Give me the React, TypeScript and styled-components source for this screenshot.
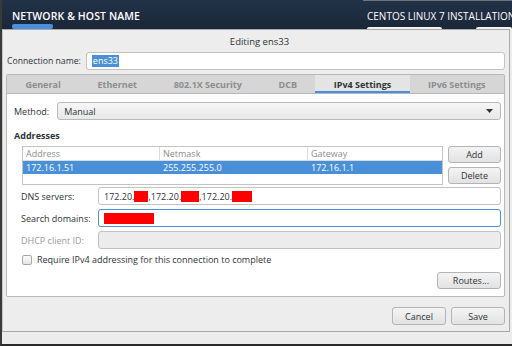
import * as React from "react"
import styled, { createGlobalStyle } from 'styled-components';

const GlobalStyle = createGlobalStyle`
  html, body {
    margin: 0;
    padding: 0;
    background: #ededed;
  }
  * {
    box-sizing: border-box;
  }
`;

const App = () => (
  <Screen>
    <GlobalStyle/>
    <TopBar>
      <SpokeSide>
        <SpokeTitle>NETWORK &amp; HOST NAME</SpokeTitle>
        <DoneButton/>
      </SpokeSide>
      <InstallSide>
        <InstallTitle>CENTOS LINUX 7 INSTALLATION</InstallTitle>
        <TopBoxes>
          <TopBox width={75}/>
          <TopBox width={36}/>
        </TopBoxes>
      </InstallSide>
    </TopBar>
    <Dialog>
      <TitleBar>Editing ens33</TitleBar>
      <NameRow>
        <NameLabel>Connection name:</NameLabel>
        <Entry>
          <Selected>ens33</Selected>
        </Entry>
      </NameRow>
      <Notebook>
        <TabBar>
          <Tab>General</Tab>
          <Tab>Ethernet</Tab>
          <Tab>802.1X Security</Tab>
          <Tab>DCB</Tab>
          <Tab active>IPv4 Settings</Tab>
          <Tab>IPv6 Settings</Tab>
        </TabBar>
        <Page>
          <MethodRow>
            <FieldLabel>Method:</FieldLabel>
            <Combo>
              <span>Manual</span>
              <svg width="7" height="4" viewBox="0 0 7 4"><path d="M0 0h7L3.5 4z" fill="#2e3436"/></svg>
            </Combo>
          </MethodRow>
          <SectionTitle>Addresses</SectionTitle>
          <AddressArea>
            <AddrTable>
              <TableHead>
                <HeadCell>Address</HeadCell>
                <HeadCell>Netmask</HeadCell>
                <HeadCell last>Gateway</HeadCell>
              </TableHead>
              <TableRow>
                <Cell>172.16.1.51</Cell>
                <Cell>255.255.255.0</Cell>
                <Cell>172.16.1.1</Cell>
              </TableRow>
            </AddrTable>
            <SideButtons>
              <Button>Add</Button>
              <Button>Delete</Button>
            </SideButtons>
          </AddressArea>
          <FormGrid>
            <FormLabel>DNS servers:</FormLabel>
            <Entry>
              172.20.<Redact width={14}/>,172.20.<Redact width={18}/>,172.20.<Redact width={20}/>
            </Entry>
            <FormLabel>Search domains:</FormLabel>
            <Entry focused>
              <Redact width={50}/>
            </Entry>
            <FormLabel disabled>DHCP client ID:</FormLabel>
            <Entry disabled/>
          </FormGrid>
          <CheckRow>
            <CheckBox/>
            <span>Require IPv4 addressing for this connection to complete</span>
          </CheckRow>
          <RoutesRow>
            <Button wide>Routes...</Button>
          </RoutesRow>
        </Page>
      </Notebook>
      <Actions>
        <Button dialog>Cancel</Button>
        <Button dialog>Save</Button>
      </Actions>
    </Dialog>
    <BottomStrip/>
  </Screen>
)

export default App

const Screen = styled.div`
  width: 512px;
  height: 346px;
  display: flex;
  flex-direction: column;
  background: #ededed;
  border-left: 2px solid #3a3a3a;
  border-bottom: 2px solid #2a2a2a;
  overflow: hidden;
  font-family: "Open Sans", "DejaVu Sans", sans-serif;
  font-size: 9px;
  color: #2e3436;
`;

const TopBar = styled.div`
  height: 29px;
  flex-shrink: 0;
  display: flex;
  justify-content: space-between;
  background: linear-gradient(180deg, #223248 0%, #1a2738 100%);
  overflow: hidden;
  margin-left: -2px;
`;

const SpokeSide = styled.div`
  display: flex;
  flex-direction: column;
  padding: 10px 0 0 12px;
`;

const SpokeTitle = styled.div`
  color: #ffffff;
  font-size: 10.5px;
  font-weight: 600;
  letter-spacing: 0.1px;
  line-height: 12px;
`;

const DoneButton = styled.div`
  margin-top: 2px;
  width: 41px;
  height: 10px;
  background: #4a8fd9;
  border-radius: 2px;
`;

const InstallSide = styled.div`
  display: flex;
  flex-direction: column;
  padding: 9px 0 0 4px;
  width: 149px;
  border-top: 1px solid #6a7482;
`;

const InstallTitle = styled.div`
  color: #ffffff;
  font-size: 10px;
  line-height: 12px;
  white-space: nowrap;
`;

const TopBoxes = styled.div`
  display: flex;
  justify-content: space-between;
  margin-top: 5px;
`;

const TopBox = styled.div<{ width: number }>`
  width: ${p => p.width}px;
  height: 10px;
  background: #f2f2f2;
  border-radius: 2px;
`;

const Dialog = styled.div`
  width: 508px;
  height: 303px;
  display: flex;
  flex-direction: column;
  background: #ededed;
  border: 1px solid #a8a8a8;
  border-left-color: #c8c8c8;
  padding: 0 4px 6px 3px;
`;

const TitleBar = styled.div`
  height: 22px;
  flex-shrink: 0;
  display: flex;
  align-items: center;
  justify-content: center;
  padding-left: 8px;
  font-size: 9.5px;
  font-weight: 500;
  color: #2e3436;
`;

const NameRow = styled.div`
  display: flex;
  align-items: center;
  gap: 5px;
  height: 18px;
`;

const NameLabel = styled.span`
  white-space: nowrap;
  padding-left: 1px;
  font-size: 8.7px;
`;

const Entry = styled.div<{ focused?: boolean; disabled?: boolean }>`
  flex: 1;
  height: 18px;
  display: flex;
  align-items: center;
  padding: 0 5px;
  background: ${p => p.disabled ? '#ececec' : '#ffffff'};
  border: 1px solid ${p => p.focused ? '#4a90d9' : '#c2c2c0'};
  border-radius: 3px;
  white-space: nowrap;
  color: #2e3436;
`;

const Selected = styled.span`
  background: #4a90d9;
  color: #ffffff;
  padding: 0 1px;
  line-height: 12px;
`;

const Notebook = styled.div`
  margin-top: 4px;
  height: 223px;
  display: flex;
  flex-direction: column;
  border: 1px solid #b8b8b8;
  border-radius: 2px;
  overflow: hidden;
`;

const TabBar = styled.div`
  display: flex;
  height: 19px;
  flex-shrink: 0;
  background: #d6d6d6;
  border-bottom: 1px solid #b8b8b8;
`;

const Tab = styled.div<{ active?: boolean }>`
  flex: 1 1 auto;
  display: flex;
  align-items: center;
  justify-content: center;
  white-space: nowrap;
  font-weight: 700;
  font-size: 9px;
  color: ${p => p.active ? '#2e3436' : '#8d8d8d'};
  background: ${p => p.active ? '#e4e4e4' : 'transparent'};
  box-shadow: ${p => p.active ? 'inset 0 -2px 0 #4a90d9' : 'none'};
`;

const Page = styled.div`
  flex: 1;
  background: #ffffff;
  padding: 8px 3px 0 7px;
  display: flex;
  flex-direction: column;
`;

const MethodRow = styled.div`
  display: flex;
  align-items: center;
  gap: 8px;
`;

const FieldLabel = styled.span`
  white-space: nowrap;
`;

const Combo = styled.div`
  flex: 1;
  height: 18px;
  display: flex;
  align-items: center;
  justify-content: space-between;
  padding: 0 7px 0 6px;
  background: linear-gradient(180deg, #f6f6f6, #e8e8e8);
  border: 1px solid #b8b8b8;
  border-radius: 3px;
`;

const SectionTitle = styled.div`
  margin-top: 9px;
  font-weight: 700;
  font-size: 9px;
`;

const AddressArea = styled.div`
  display: flex;
  gap: 5px;
  margin-top: 4px;
  padding-left: 8px;
`;

const AddrTable = styled.div`
  flex: 1;
  height: 39px;
  border: 1px solid #c4c4c4;
  background: #ffffff;
`;

const TableHead = styled.div`
  display: grid;
  grid-template-columns: 137px 148px 1fr;
  height: 14px;
`;

const HeadCell = styled.div<{ last?: boolean }>`
  display: flex;
  align-items: center;
  padding-left: 3px;
  color: #8d8d8d;
  border-right: ${p => p.last ? 'none' : '1px solid #dcdcdc'};
  border-bottom: 1px solid #dcdcdc;
`;

const TableRow = styled.div`
  display: grid;
  grid-template-columns: 137px 148px 1fr;
  height: 13px;
  background: #4a90d9;
  color: #ffffff;
`;

const Cell = styled.div`
  display: flex;
  align-items: center;
  padding-left: 3px;
`;

const SideButtons = styled.div`
  display: flex;
  flex-direction: column;
  gap: 4px;
`;

const Button = styled.div<{ wide?: boolean; dialog?: boolean }>`
  width: ${p => p.wide ? 64 : p.dialog ? 54 : 53}px;
  height: ${p => p.dialog ? 18 : 17}px;
  display: flex;
  align-items: center;
  justify-content: ${p => p.wide ? 'flex-end' : 'center'};
  padding-right: ${p => p.wide ? '11px' : '0'};
  background: linear-gradient(180deg, #f4f4f4, #e2e2e2);
  border: 1px solid #b4b4b4;
  border-radius: 3px;
  color: #2e3436;
  white-space: nowrap;
`;

const FormGrid = styled.div`
  display: grid;
  grid-template-columns: 77px 1fr;
  row-gap: 4px;
  align-items: center;
  margin-top: 2px;
  padding-left: 7px;
`;

const FormLabel = styled.span<{ disabled?: boolean }>`
  color: ${p => p.disabled ? '#9a9a9a' : '#2e3436'};
  white-space: nowrap;
`;

const Redact = styled.span<{ width: number }>`
  display: inline-block;
  width: ${p => p.width}px;
  height: 11px;
  background: #ff0000;
`;

const CheckRow = styled.div`
  display: flex;
  align-items: center;
  gap: 5px;
  margin-top: 4px;
  padding-left: 8px;
`;

const CheckBox = styled.span`
  width: 10px;
  height: 10px;
  border: 1px solid #a8a8a8;
  border-radius: 2px;
  background: linear-gradient(180deg, #fafafa, #e6e6e6);
`;

const RoutesRow = styled.div`
  display: flex;
  justify-content: flex-end;
  margin-top: 6px;
`;

const Actions = styled.div`
  margin-top: auto;
  display: flex;
  justify-content: flex-end;
  gap: 5px;
`;

const BottomStrip = styled.div`
  flex: 1;
  background: #ececec;
`;
